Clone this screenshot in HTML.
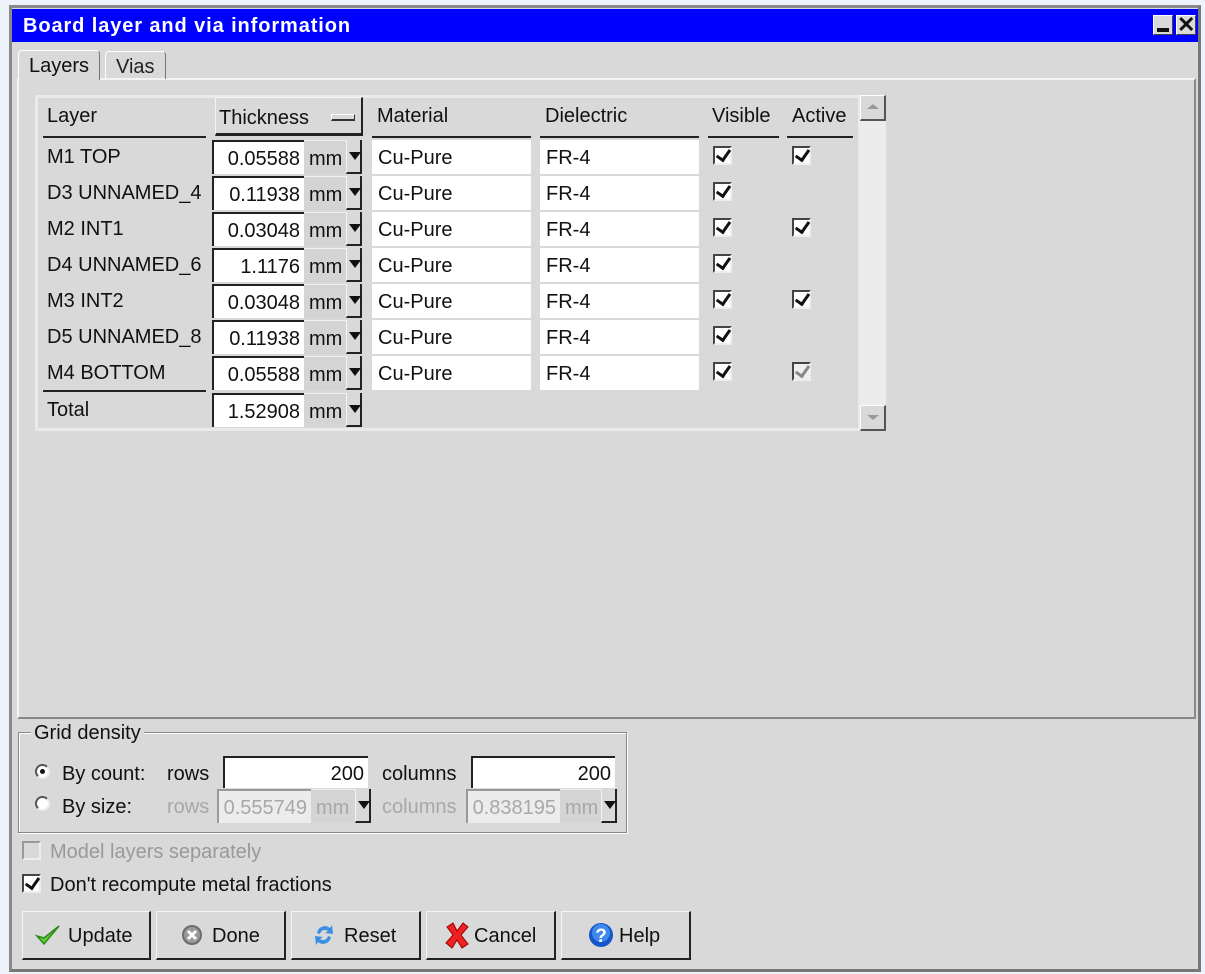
<!DOCTYPE html>
<html><head><meta charset="utf-8"><style>
*{box-sizing:border-box}
body{margin:0;width:1205px;height:974px;background:#eef2fb;font-family:"Liberation Sans",sans-serif;font-size:20px;color:#111;position:relative;overflow:hidden}
.a{position:absolute}
.win{left:9px;top:5px;width:1192px;height:967px;background:#d9d9d9;border:3px solid #8a8a8a;border-right-color:#777;border-bottom-color:#777}
.title{left:12px;top:9px;width:1186px;height:33px;background:#0000ff;color:#fff;font-weight:bold;font-size:20px;letter-spacing:0.9px;line-height:35px;padding-left:11px}
.tbtn{top:15px;width:20px;height:20px;background:#d9d9d9;border:1px solid #fff;border-right-color:#444;border-bottom-color:#444}
.tab{top:51px;height:28px;border:1px solid #fff;border-bottom:none;border-right-color:#777;border-radius:4px 4px 0 0;padding:0 10px;line-height:30px}
.panel{left:17px;top:78px;width:1179px;height:641px;border:2px solid #f4f4f4;border-right-color:#888;border-bottom-color:#888}
.frame{left:35px;top:95px;width:826px;height:336px;border:3px solid #eaeaea}
.hl{height:2px;background:#222}
.in{height:34px;background:#fff;border-top:2px solid #222;border-left:2px solid #222;text-align:right;padding-right:4px;line-height:34px}
.un{height:34px;width:58px;background:#d4d4d4;line-height:36px;padding-left:5px;border-top:1px solid #eee}
.dd{width:16px;height:34px;background:#d9d9d9;border-left:1px solid #f4f4f4;border-right:2px solid #222;border-bottom:2px solid #222}
.dd:after{content:"";position:absolute;left:2px;top:12px;border-left:6px solid transparent;border-right:6px solid transparent;border-top:8px solid #111}
.tf{height:34px;background:#fff;line-height:36px;padding-left:6px}
.cb{width:19px;height:19px;background:#fff;border:2px solid #444;border-right-color:#eee;border-bottom-color:#eee}
.cb:after{content:"";position:absolute;left:4px;top:-1px;width:6px;height:11px;border-right:3.5px solid #111;border-bottom:3.5px solid #111;transform:rotate(35deg)}
.cb.g:after{border-color:#888}
.lbl{line-height:36px}
.btn{top:911px;height:49px;background:#d9d9d9;border:1px solid #f4f4f4;border-right:2px solid #222;border-bottom:2px solid #222;line-height:48px}
.dis{color:#a8a8a8}
</style></head><body>
<div class="a win"></div>
<div class="a title">Board layer and via information</div>
<div class="a tbtn" style="left:1153px"><div class="a" style="left:3px;top:12px;width:12px;height:4px;background:#111"></div></div>
<div class="a tbtn" style="left:1176px;font-weight:bold;font-size:22px;line-height:18px;text-align:center">✕</div>

<div class="a panel"></div>
<div class="a tab" style="left:18px;top:50px;height:30px;background:#d9d9d9;z-index:2;border-bottom:none">Layers</div>
<div class="a tab" style="left:105px;color:#222">Vias</div>

<div class="a frame"></div>
<div class="a" style="left:47px;top:105px">Layer</div>
<div class="a hl" style="left:43px;top:136px;width:163px"></div>
<div class="a" style="left:215px;top:97px;width:148px;height:39px;border:1px solid #f4f4f4;border-right:2px solid #222;border-bottom:3px solid #222;line-height:40px;padding-left:3px">Thickness<div class="a" style="left:115px;top:16px;width:24px;height:7px;border:1px solid #fff;border-right-color:#333;border-bottom:2px solid #333"></div></div>
<div class="a" style="left:377px;top:105px">Material</div>
<div class="a hl" style="left:372px;top:136px;width:159px"></div>
<div class="a" style="left:545px;top:105px">Dielectric</div>
<div class="a hl" style="left:540px;top:136px;width:159px"></div>
<div class="a" style="left:712px;top:105px">Visible</div>
<div class="a hl" style="left:708px;top:136px;width:71px"></div>
<div class="a" style="left:792px;top:105px">Active</div>
<div class="a hl" style="left:787px;top:136px;width:66px"></div>

<div class="a lbl" style="left:47px;top:139px">M1 TOP</div>
<div class="a lbl" style="left:47px;top:175px">D3 UNNAMED_4</div>
<div class="a lbl" style="left:47px;top:211px">M2 INT1</div>
<div class="a lbl" style="left:47px;top:247px">D4 UNNAMED_6</div>
<div class="a lbl" style="left:47px;top:283px">M3 INT2</div>
<div class="a lbl" style="left:47px;top:319px">D5 UNNAMED_8</div>
<div class="a lbl" style="left:47px;top:355px">M4 BOTTOM</div>
<div class="a hl" style="left:43px;top:390px;width:163px"></div>
<div class="a lbl" style="left:47px;top:392px">Total</div>

<div class="a in" style="left:212px;top:140px;width:92px">0.05588</div>
<div class="a in" style="left:212px;top:176px;width:92px">0.11938</div>
<div class="a in" style="left:212px;top:212px;width:92px">0.03048</div>
<div class="a in" style="left:212px;top:248px;width:92px">1.1176</div>
<div class="a in" style="left:212px;top:284px;width:92px">0.03048</div>
<div class="a in" style="left:212px;top:320px;width:92px">0.11938</div>
<div class="a in" style="left:212px;top:356px;width:92px">0.05588</div>
<div class="a in" style="left:212px;top:393px;width:92px">1.52908</div>

<div class="a un" style="left:304px;top:140px">mm</div><div class="a dd" style="left:346px;top:140px"></div>
<div class="a un" style="left:304px;top:176px">mm</div><div class="a dd" style="left:346px;top:176px"></div>
<div class="a un" style="left:304px;top:212px">mm</div><div class="a dd" style="left:346px;top:212px"></div>
<div class="a un" style="left:304px;top:248px">mm</div><div class="a dd" style="left:346px;top:248px"></div>
<div class="a un" style="left:304px;top:284px">mm</div><div class="a dd" style="left:346px;top:284px"></div>
<div class="a un" style="left:304px;top:320px">mm</div><div class="a dd" style="left:346px;top:320px"></div>
<div class="a un" style="left:304px;top:356px">mm</div><div class="a dd" style="left:346px;top:356px"></div>
<div class="a un" style="left:304px;top:393px">mm</div><div class="a dd" style="left:346px;top:393px"></div>

<div class="a tf" style="left:372px;top:140px;width:159px">Cu-Pure</div><div class="a tf" style="left:540px;top:140px;width:159px">FR-4</div>
<div class="a tf" style="left:372px;top:176px;width:159px">Cu-Pure</div><div class="a tf" style="left:540px;top:176px;width:159px">FR-4</div>
<div class="a tf" style="left:372px;top:212px;width:159px">Cu-Pure</div><div class="a tf" style="left:540px;top:212px;width:159px">FR-4</div>
<div class="a tf" style="left:372px;top:248px;width:159px">Cu-Pure</div><div class="a tf" style="left:540px;top:248px;width:159px">FR-4</div>
<div class="a tf" style="left:372px;top:284px;width:159px">Cu-Pure</div><div class="a tf" style="left:540px;top:284px;width:159px">FR-4</div>
<div class="a tf" style="left:372px;top:320px;width:159px">Cu-Pure</div><div class="a tf" style="left:540px;top:320px;width:159px">FR-4</div>
<div class="a tf" style="left:372px;top:356px;width:159px">Cu-Pure</div><div class="a tf" style="left:540px;top:356px;width:159px">FR-4</div>

<div class="a cb" style="left:713px;top:146px"></div><div class="a cb" style="left:792px;top:146px"></div>
<div class="a cb" style="left:713px;top:182px"></div>
<div class="a cb" style="left:713px;top:218px"></div><div class="a cb" style="left:792px;top:218px"></div>
<div class="a cb" style="left:713px;top:254px"></div>
<div class="a cb" style="left:713px;top:290px"></div><div class="a cb" style="left:792px;top:290px"></div>
<div class="a cb" style="left:713px;top:326px"></div>
<div class="a cb" style="left:713px;top:362px"></div><div class="a cb g" style="left:792px;top:362px;background:#eee"></div>

<div class="a" style="left:860px;top:95px;width:26px;height:336px;background:#ececec"></div>
<div class="a" style="left:860px;top:95px;width:26px;height:26px;background:#d9d9d9;border:1px solid #fff;border-right:2px solid #555;border-bottom:2px solid #555"><div class="a" style="left:6px;top:8px;border-left:6px solid transparent;border-right:6px solid transparent;border-bottom:5px solid #999"></div></div>
<div class="a" style="left:860px;top:405px;width:26px;height:26px;background:#d9d9d9;border:1px solid #fff;border-right:2px solid #555;border-bottom:2px solid #555"><div class="a" style="left:6px;top:9px;border-left:6px solid transparent;border-right:6px solid transparent;border-top:5px solid #999"></div></div>

<div class="a" style="left:18px;top:732px;width:609px;height:101px;border:1px solid #888;box-shadow:1px 1px 0 #fff inset,1px 1px 0 #fff"></div>
<div class="a" style="left:31px;top:722px;background:#d9d9d9;padding:0 3px">Grid density</div>
<div class="a" style="left:35px;top:764px;width:15px;height:15px;border-radius:50%;background:#fff;border:2px solid #555;border-right-color:#eee;border-bottom-color:#eee"><div class="a" style="left:3px;top:3px;width:5px;height:5px;border-radius:50%;background:#111"></div></div>
<div class="a" style="left:62px;top:763px">By count:</div>
<div class="a" style="left:167px;top:763px">rows</div>
<div class="a in" style="left:223px;top:756px;width:145px;height:32px;line-height:32px">200</div>
<div class="a" style="left:382px;top:763px">columns</div>
<div class="a in" style="left:471px;top:756px;width:144px;height:32px;line-height:32px">200</div>
<div class="a" style="left:35px;top:796px;width:15px;height:15px;border-radius:50%;background:#fff;border:2px solid #555;border-right-color:#eee;border-bottom-color:#eee"></div>
<div class="a" style="left:62px;top:796px">By size:</div>
<div class="a dis" style="left:167px;top:796px">rows</div>
<div class="a in dis" style="left:217px;top:789px;width:94px;height:34px;background:#ececec;border-color:#999">0.555749</div>
<div class="a un dis" style="left:311px;top:789px;width:45px">mm</div><div class="a dd" style="left:355px;top:789px;height:34px"></div>
<div class="a dis" style="left:382px;top:796px">columns</div>
<div class="a in dis" style="left:466px;top:789px;width:94px;height:34px;background:#ececec;border-color:#999">0.838195</div>
<div class="a un dis" style="left:560px;top:789px;width:45px">mm</div><div class="a dd" style="left:601px;top:789px;height:34px"></div>

<div class="a" style="left:22px;top:841px;width:19px;height:19px;border:2px solid #999;border-right-color:#eee;border-bottom-color:#eee"></div>
<div class="a dis" style="left:50px;top:841px;color:#999">Model layers separately</div>
<div class="a cb" style="left:22px;top:874px"></div>
<div class="a" style="left:50px;top:874px">Don't recompute metal fractions</div>

<div class="a btn" style="left:22px;width:129px"><svg class="a" style="left:12px;top:11px" width="26" height="24" viewBox="0 0 26 24"><path d="M2 13 L9 21 L24 3 L9 15 Z" fill="#5fd03a" stroke="#2c8a1a" stroke-width="1.5"/></svg><span class="a" style="left:45px">Update</span></div>
<div class="a btn" style="left:156px;width:130px"><svg class="a" style="left:24px;top:12px" width="22" height="22"><circle cx="11" cy="11" r="10" fill="#6c6c6c"/><circle cx="11" cy="11" r="8" fill="#9a9a9a"/><path d="M7 7 L15 15 M15 7 L7 15" stroke="#fff" stroke-width="3"/></svg><span class="a" style="left:55px">Done</span></div>
<div class="a btn" style="left:291px;width:130px"><svg class="a" style="left:20px;top:9px" width="24" height="28"><path d="M5 12 A8 8 0 0 1 18 7 L20 4 L21 13 L13 12 L16 10 A5 5 0 0 0 8 13 Z" fill="#3b8fe0"/><path d="M19 16 A8 8 0 0 1 6 21 L4 24 L3 15 L11 16 L8 18 A5 5 0 0 0 16 15 Z" fill="#3b8fe0"/></svg><span class="a" style="left:52px">Reset</span></div>
<div class="a btn" style="left:426px;width:130px"><svg class="a" style="left:16px;top:9px" width="28" height="28"><path d="M4 6 L10 2 L14 10 L20 2 L25 6 L18 14 L25 23 L19 27 L14 19 L9 27 L3 22 L10 14 Z" fill="#e22" stroke="#900" stroke-width="1"/></svg><span class="a" style="left:47px">Cancel</span></div>
<div class="a btn" style="left:561px;width:130px"><svg class="a" style="left:26px;top:10px" width="26" height="26"><circle cx="13" cy="13" r="12" fill="#1656c8"/><circle cx="13" cy="11" r="9" fill="#3f88ee"/><text x="13" y="20" font-family="Liberation Sans" font-weight="bold" font-size="19" fill="#fff" text-anchor="middle">?</text></svg><span class="a" style="left:57px">Help</span></div>
</body></html>
